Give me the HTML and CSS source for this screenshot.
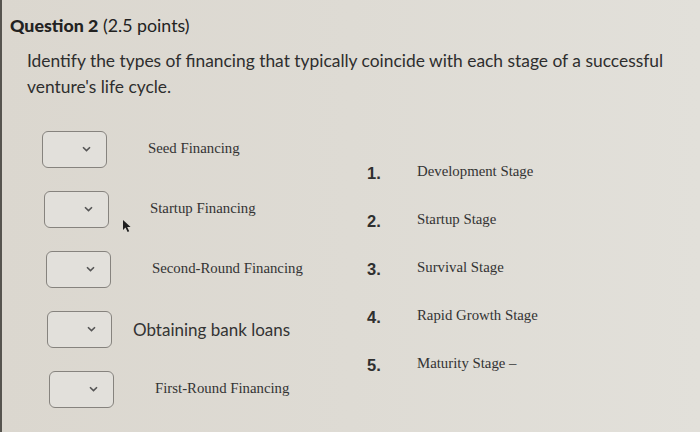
FILE: index.html
```html
<!DOCTYPE html>
<html>
<head>
<meta charset="utf-8">
<link rel="stylesheet" href="styles.css">
</head>
<body>
<div class="page">
  <h2 class="title"><b>Question 2</b> (2.5 points)</h2>
  <p class="prompt">Identify the types of financing that typically coincide with each stage of a successful venture's life cycle.</p>
  <div class="match">
    <div class="left">
      <div class="row r1"><div class="sel"><svg width="9" height="6" viewBox="0 0 9 6"><path d="M1 1.2 L4.5 4.6 L8 1.2" fill="none" stroke="#555" stroke-width="1.6"/></svg></div><span class="serif">Seed Financing</span></div>
      <div class="row r2"><div class="sel"><svg width="9" height="6" viewBox="0 0 9 6"><path d="M1 1.2 L4.5 4.6 L8 1.2" fill="none" stroke="#555" stroke-width="1.6"/></svg></div><span class="serif">Startup Financing</span></div>
      <div class="row r3"><div class="sel"><svg width="9" height="6" viewBox="0 0 9 6"><path d="M1 1.2 L4.5 4.6 L8 1.2" fill="none" stroke="#555" stroke-width="1.6"/></svg></div><span class="serif">Second-Round Financing</span></div>
      <div class="row r4"><div class="sel"><svg width="9" height="6" viewBox="0 0 9 6"><path d="M1 1.2 L4.5 4.6 L8 1.2" fill="none" stroke="#555" stroke-width="1.6"/></svg></div><span class="sans">Obtaining bank loans</span></div>
      <div class="row r5"><div class="sel"><svg width="9" height="6" viewBox="0 0 9 6"><path d="M1 1.2 L4.5 4.6 L8 1.2" fill="none" stroke="#555" stroke-width="1.6"/></svg></div><span class="serif">First-Round Financing</span></div>
    </div>
    <ol class="right">
      <li><span class="num">1.</span><span class="serif">Development Stage</span></li>
      <li><span class="num">2.</span><span class="serif">Startup Stage</span></li>
      <li><span class="num">3.</span><span class="serif">Survival Stage</span></li>
      <li><span class="num">4.</span><span class="serif">Rapid Growth Stage</span></li>
      <li><span class="num">5.</span><span class="serif">Maturity Stage –</span></li>
    </ol>
    <svg class="cursor" width="10" height="14" viewBox="0 0 10 14"><path d="M1 1 L1 11 L3.5 8.6 L5.6 13 L7.2 12.2 L5.2 8 L8.6 8 Z" fill="#1e1e1e"/></svg>
  </div>
</div>
</body>
</html>
```
FILE: styles.css
```css
html, body {
  margin: 0;
  padding: 0;
}
body {
  width: 700px;
  height: 432px;
  overflow: hidden;
  background: linear-gradient(90deg, #dbd7cf 0%, #dedbd4 50%, #e2e0da 100%);
}
.page {
  height: 432px;
  box-sizing: border-box;
  border-left: 2px solid #56544f;
  padding: 14px 0 0 8px;
  color: #2b2b2b;
  font-family: Lato, "Liberation Sans", sans-serif;
}
.title {
  margin: 0;
  font-size: 17.8px;
  font-weight: normal;
  line-height: 22px;
  color: #222;
}
.title b {
  font-weight: 900;
}
.prompt {
  margin: 12px 0 0 17px;
  width: 660px;
  font-size: 17.4px;
  line-height: 26px;
  color: #2e2e2e;
}
.match {
  position: relative;
  display: flex;
  margin-top: 30px;
}
.left {
  display: flex;
  flex-direction: column;
  gap: 22px;
  width: 357px;
}
.row {
  display: flex;
  align-items: center;
  height: 38px;
}
.r1 { margin-left: 32px; }
.r2 { margin-left: 34px; }
.r3 { margin-left: 36px; }
.r4 { margin-left: 37px; }
.r5 { margin-left: 39px; }
.sel {
  width: 48px;
  height: 35px;
  border: 1.5px solid #86837e;
  border-radius: 6px;
  background: #e2e0db;
  display: flex;
  align-items: center;
  justify-content: flex-end;
  padding-right: 15px;
  box-sizing: content-box;
  flex: none;
}
.sel svg {
  display: block;
}
.serif {
  font-family: "Liberation Serif", serif;
  font-size: 14.8px;
  color: #333;
}
.row .serif {
  margin-left: 41px;
  position: relative;
  top: -1px;
}
.r4 .sans {
  margin-left: 21px;
  font-size: 17px;
  color: #333;
}
.right {
  list-style: none;
  margin: 0;
  padding: 19px 0 0 0;
  display: flex;
  flex-direction: column;
}
.right li {
  display: flex;
  align-items: center;
  height: 48px;
}
.right li .serif {
  position: relative;
  top: -2px;
}
.num {
  font-family: "Liberation Sans", sans-serif;
  font-weight: bold;
  font-size: 16.5px;
  color: #2f2f2f;
  width: 50px;
}
.cursor {
  position: absolute;
  left: 112px;
  top: 89px;
}
```
